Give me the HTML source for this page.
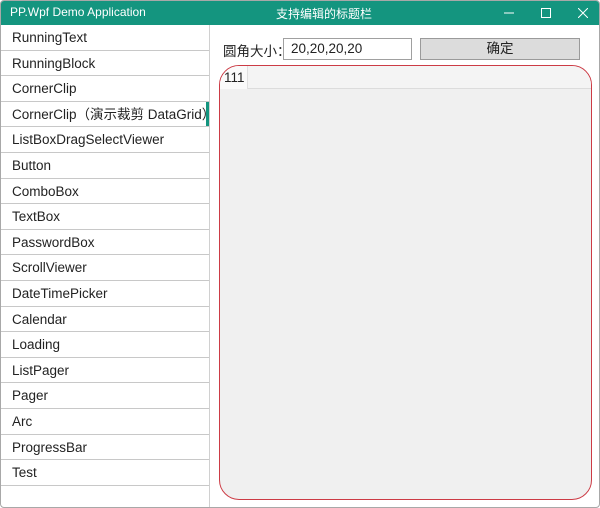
<!DOCTYPE html>
<html><head><meta charset="utf-8"><style>
*{box-sizing:border-box;margin:0;padding:0}
body{width:600px;height:508px;overflow:hidden;background:#fff;font-family:"Liberation Sans","Noto Sans CJK SC",sans-serif;position:relative}
#win{position:absolute;left:0;top:0;width:600px;height:508px;border:1px solid #a8a8a8;border-radius:4px;overflow:hidden;background:#fff}
#title{position:absolute;left:0;top:0;width:600px;height:24px;background:#14957f;color:#fff;font-size:12px}
#title .l{position:absolute;left:9px;top:4px}
#title .c{position:absolute;left:275px;top:4px}
#title svg{position:absolute;top:7px}
#side{position:absolute;left:0;top:24px;width:209px;height:484px;border-right:1px solid #d0d0d0}
.it{height:25.6px;border-bottom:1px solid #c8c8c8;font-size:13.5px;color:#222;padding-left:11px;line-height:25px;position:relative;white-space:nowrap}
.it.sel::after{content:"";position:absolute;right:0;top:0;width:3px;height:100%;background:#14957f}
#lab{position:absolute;left:222px;top:39px;font-size:13.5px;color:#222}
#inp{position:absolute;left:282px;top:37px;width:129px;height:22px;border:1px solid #a0a0a0;font-size:13.5px;padding-left:7px;line-height:20px;color:#222}
#btn{position:absolute;left:419px;top:37px;width:160px;height:22px;border:1px solid #9a9a9a;background:#dcdcdc;font-size:13.5px;text-align:center;line-height:20px;color:#222}
#grid{position:absolute;left:218px;top:64px;width:373px;height:435px;border:1.2px solid #cc3b45;border-radius:20px;background:#f0f0f0;overflow:hidden}
#hdr{position:absolute;left:0;top:0;width:100%;height:23px;border-bottom:1px solid #dcdcdc;background:#f4f4f4}
#hdr span{position:absolute;left:0;top:0;width:28px;height:23px;background:#fafafa;border-right:1px solid #e0e0e0;font-size:13.5px;padding-left:4px;line-height:23px;color:#222;white-space:nowrap}
</style></head><body><div id="win">
<div id="title"><span class="l">PP.Wpf Demo Application</span><span class="c">支持编辑的标题栏</span>
<svg style="left:503px" width="10" height="10"><line x1="0" y1="5" x2="10" y2="5" stroke="#fff"/></svg>
<svg style="left:540px" width="10" height="10"><rect x="0.5" y="0.5" width="9" height="9" fill="none" stroke="#fff"/></svg>
<svg style="left:577px" width="10" height="10"><path d="M0 0L10 10M10 0L0 10" stroke="#fff"/></svg>
</div>
<div id="side">
<div class="it">RunningText</div><div class="it">RunningBlock</div><div class="it">CornerClip</div>
<div class="it sel">CornerClip（演示裁剪 DataGrid）</div><div class="it">ListBoxDragSelectViewer</div>
<div class="it">Button</div><div class="it">ComboBox</div><div class="it">TextBox</div><div class="it">PasswordBox</div>
<div class="it">ScrollViewer</div><div class="it">DateTimePicker</div><div class="it">Calendar</div><div class="it">Loading</div>
<div class="it">ListPager</div><div class="it">Pager</div><div class="it">Arc</div><div class="it">ProgressBar</div><div class="it">Test</div>
</div>
<div id="lab">圆角大小：</div>
<div id="inp">20,20,20,20</div>
<div id="btn">确定</div>
<div id="grid"><div id="hdr"><span>111</span></div></div>
</div></body></html>
